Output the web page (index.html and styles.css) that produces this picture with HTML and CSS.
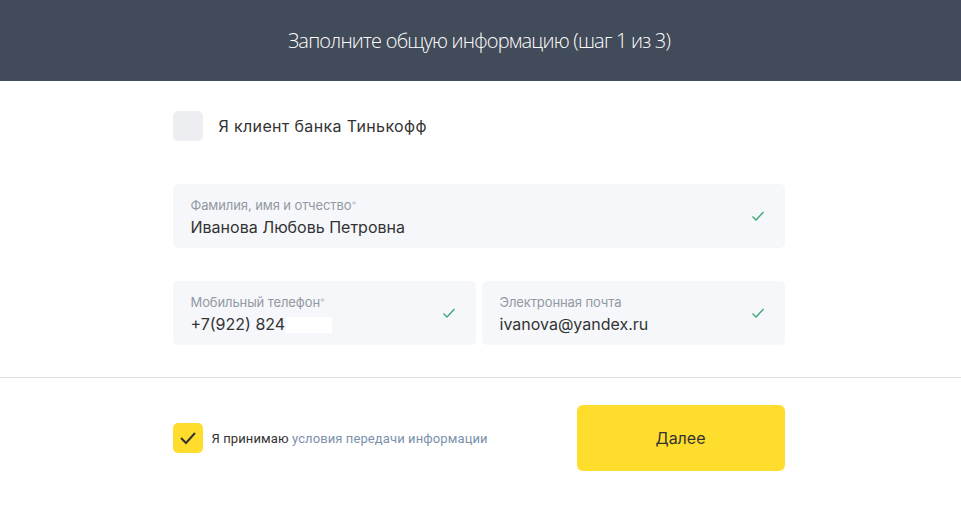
FILE: index.html
```html
<!DOCTYPE html>
<html lang="ru">
<head>
<meta charset="utf-8">
<link rel="stylesheet" href="styles.css">
</head>
<body>
<header class="top">
  <h1 class="title">Заполните общую информацию (шаг 1 из 3)</h1>
</header>
<main class="form">
  <label class="client">
    <span class="box"></span>
    <span class="client-text">Я клиент банка Тинькофф</span>
  </label>
  <div class="field full">
    <div class="field-body">
      <div class="label">Фамилия, имя и отчество<span class="star">*</span></div>
      <div class="value">Иванова Любовь Петровна</div>
    </div>
    <svg class="ok" width="14" height="12" viewBox="0 0 14 12"><path d="M1.5 6.5 L5 10 L12.5 2" fill="none" stroke="#3aa676" stroke-width="1.3"/></svg>
  </div>
  <div class="row">
    <div class="field">
      <div class="field-body">
        <div class="label">Мобильный телефон<span class="star">*</span></div>
        <div class="value">+7(922) 824<span class="mask"></span></div>
      </div>
      <svg class="ok" width="14" height="12" viewBox="0 0 14 12"><path d="M1.5 6.5 L5 10 L12.5 2" fill="none" stroke="#3aa676" stroke-width="1.3"/></svg>
    </div>
    <div class="field">
      <div class="field-body">
        <div class="label">Электронная почта</div>
        <div class="value">ivanova@yandex.ru</div>
      </div>
      <svg class="ok" width="14" height="12" viewBox="0 0 14 12"><path d="M1.5 6.5 L5 10 L12.5 2" fill="none" stroke="#3aa676" stroke-width="1.3"/></svg>
    </div>
  </div>
</main>
<footer class="bottom">
  <div class="bottom-inner">
    <label class="agree">
      <span class="box yellow">
        <svg width="18" height="14" viewBox="0 0 18 14"><path d="M2 7 L7 12 L16 2" fill="none" stroke="#333" stroke-width="2"/></svg>
      </span>
      <span class="agree-text">Я принимаю <a class="link">условия передачи информации</a></span>
    </label>
    <button class="next">Далее</button>
  </div>
</footer>
</body>
</html>
```
FILE: styles.css
```css
* { box-sizing: border-box; }
html, body { margin: 0; padding: 0; background: #fff; }
body { font-family: Inter, Roboto, "Liberation Sans", sans-serif; color: #333; }

.top {
  height: 81px;
  background: #424b59;
  display: flex;
  align-items: center;
  justify-content: center;
  padding-right: 3px;
}
.title {
  margin: 0;
  font-family: "Open Sans", sans-serif;
  font-weight: 300;
  font-size: 20px;
  letter-spacing: -0.8px;
  color: #fff;
}

.form {
  width: 612px;
  margin: 0 auto;
  padding: 30px 0 32px;
  transform: translateX(-2px);
}
.client {
  display: flex;
  align-items: center;
  gap: 16px;
  height: 30px;
}
.box {
  width: 30px;
  height: 30px;
  border-radius: 5px;
  background: #eceef1;
  display: flex;
  align-items: center;
  justify-content: center;
  flex-shrink: 0;
}
.client-text { font-size: 16px; letter-spacing: 0.35px; color: #333; }

.field {
  height: 64px;
  background: #f5f7fa;
  border-radius: 5px;
  display: flex;
  align-items: center;
  padding: 2px 20px 0 18px;
}
.full { margin-top: 43px; }
.field-body { flex: 1; }
.label { font-size: 13px; color: #9299a2; line-height: 14px; letter-spacing: -0.1px; }
.star { color: #c3c7cc; font-size: 10px; vertical-align: top; }
.value { font-size: 16px; color: #333; line-height: 20px; margin-top: 5px; }
.mask { display: inline-block; width: 46px; height: 16px; background: #fff; vertical-align: middle; margin-left: 1px; }
.ok { flex-shrink: 0; margin-top: -2px; }

.row {
  margin-top: 33px;
  display: grid;
  grid-template-columns: 1fr 1fr;
  gap: 6px;
}

.bottom { border-top: 1px solid #e0e0e0; }
.bottom-inner {
  width: 612px;
  margin: 0 auto;
  transform: translateX(-2px);
  padding: 27px 0 30px;
  display: flex;
  align-items: center;
  justify-content: space-between;
}
.agree { display: flex; align-items: center; gap: 9px; }
.yellow { background: #ffdd2d; }
.agree-text { font-family: Roboto, "Liberation Sans", sans-serif; font-size: 13px; letter-spacing: 0.1px; color: #333; }
.link { color: #7b90ac; text-decoration: none; }
.next {
  width: 208px;
  height: 66px;
  border: none;
  border-radius: 6px;
  background: #ffdd2d;
  font-family: Inter, Roboto, "Liberation Sans", sans-serif;
  font-size: 16px;
  color: #333;
}
```
